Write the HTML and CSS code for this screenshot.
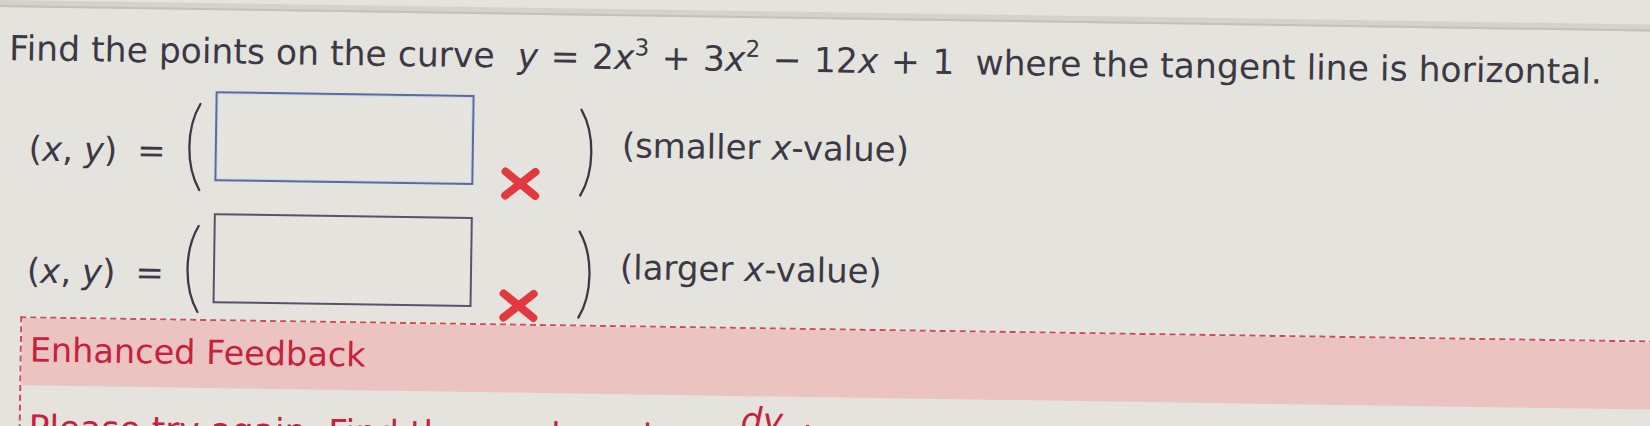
FILE: index.html
```html
<!DOCTYPE html>
<html lang="en">
<head>
<meta charset="utf-8">
<title>Horizontal tangent</title>
<link rel="stylesheet" href="styles.css">
</head>
<body>
<div class="page">
  <div class="topbar"></div>
  <p class="question">Find the points on the curve <span class="math"><i>y</i><span class="op">=</span>2<i>x</i><sup>3</sup><span class="op">+</span>3<i>x</i><sup>2</sup><span class="op">−</span>12<i>x</i><span class="op">+</span>1</span> where the tangent line is horizontal.</p>

  <div class="row">
    <span class="lhs">(<i>x</i>, <i>y</i>)<span class="eq">=</span></span>
    <svg class="paren" viewBox="0 0 18 90" width="18" height="90"><path d="M16 2 C2 26 2 64 16 88" /></svg>
    <span class="box box-active"></span>
    <svg class="mark" viewBox="0 0 42 38" width="42" height="38"><path d="M6 7 L36 31 M36 7 L6 31" /></svg>
    <svg class="paren close" viewBox="0 0 18 90" width="18" height="90"><path d="M2 2 C16 26 16 64 2 88" /></svg>
    <span class="note">(smaller <i>x</i>-value)</span>
  </div>

  <div class="row">
    <span class="lhs">(<i>x</i>, <i>y</i>)<span class="eq">=</span></span>
    <svg class="paren" viewBox="0 0 18 90" width="18" height="90"><path d="M16 2 C2 26 2 64 16 88" /></svg>
    <span class="box"></span>
    <svg class="mark" viewBox="0 0 42 38" width="42" height="38"><path d="M6 7 L36 31 M36 7 L6 31" /></svg>
    <svg class="paren close" viewBox="0 0 18 90" width="18" height="90"><path d="M2 2 C16 26 16 64 2 88" /></svg>
    <span class="note">(larger <i>x</i>-value)</span>
  </div>

  <div class="feedback">
    <div class="fb-head">Enhanced Feedback</div>
    <div class="fb-body">Please try again. Find the <i>x</i>-value where <span class="frac"><span class="num"><i>dy</i></span><span class="den"><i>dx</i></span></span> is equal to 0.</div>
  </div>
</div>
</body>
</html>
```
FILE: styles.css
```css
html, body {
  margin: 0;
  padding: 0;
  background: #e5e3de;
  overflow: hidden;
}
body {
  width: 1650px;
  height: 426px;
  font-family: "DejaVu Sans", Verdana, sans-serif;
  color: #3c3946;
}
.page {
  width: 1700px;
  transform: rotate(0.85deg);
  transform-origin: 0 0;
}
.topbar {
  height: 5px;
  background: #d4d2cd;
  border-bottom: 2px solid #c4c1bc;
  margin-left: -20px;
}
.question {
  margin: 21px 0 0 10px;
  font-size: 34.6px;
  line-height: 40px;
  white-space: nowrap;
}
.math {
  margin: 0 10px 0 12px;
}
.math i, .lhs i, .note i, .fb-body i {
  font-style: italic;
}
.op {
  margin: 0 0.36em;
}
.math sup {
  font-size: 23px;
  line-height: 0;
  vertical-align: 0.62em;
}
.row {
  display: flex;
  align-items: center;
  margin: 20px 0 0 31px;
  height: 90px;
}
.row + .row {
  margin-top: 32px;
}
.lhs, .note {
  font-size: 34px;
  line-height: 40px;
  white-space: nowrap;
}
.lhs {
  margin-top: 30px;
}
.eq {
  margin-left: 20px;
}
.note {
  margin-top: 6px;
  margin-left: 25px;
}
.paren {
  margin-top: 22px;
  flex: none;
}
.paren path {
  fill: none;
  stroke: #3c3946;
  stroke-width: 2.3;
  stroke-linecap: round;
}
.lhs + .paren {
  margin-left: 18px;
}
.box {
  flex: none;
  width: 255px;
  height: 86px;
  margin-left: 13px;
  border: 2px solid #56546a;
  background: #e6e4df;
}
.box-active {
  border-color: #5a6b9f;
  box-shadow: inset 0 0 0 1px #c9d6ea;
}
.mark {
  flex: none;
  align-self: flex-end;
  margin: 0 0 -17px 26px;
}
.mark path {
  fill: none;
  stroke: #e03a40;
  stroke-width: 8;
  stroke-linecap: round;
}
.paren.close {
  margin-left: 37px;
}
.feedback {
  margin: 16px 0 0 25px;
  border-top: 2px dashed #d04a5e;
  border-left: 2px dashed #d04a5e;
  color: #c6203d;
}
.fb-head {
  background: #ebc4c1;
  font-size: 33.5px;
  line-height: 40px;
  padding: 12px 12px 15px 8px;
}
.fb-body {
  font-size: 34.5px;
  line-height: 40px;
  padding: 7px 12px 12px 8px;
  white-space: nowrap;
}
.frac {
  display: inline-flex;
  flex-direction: column;
  align-items: center;
  vertical-align: middle;
  line-height: 1;
  margin: 0 6px;
}
.frac .num {
  padding: 0 3px 2px;
  border-bottom: 2px solid #c6203d;
}
.frac .den {
  padding: 2px 3px 0;
}
```
